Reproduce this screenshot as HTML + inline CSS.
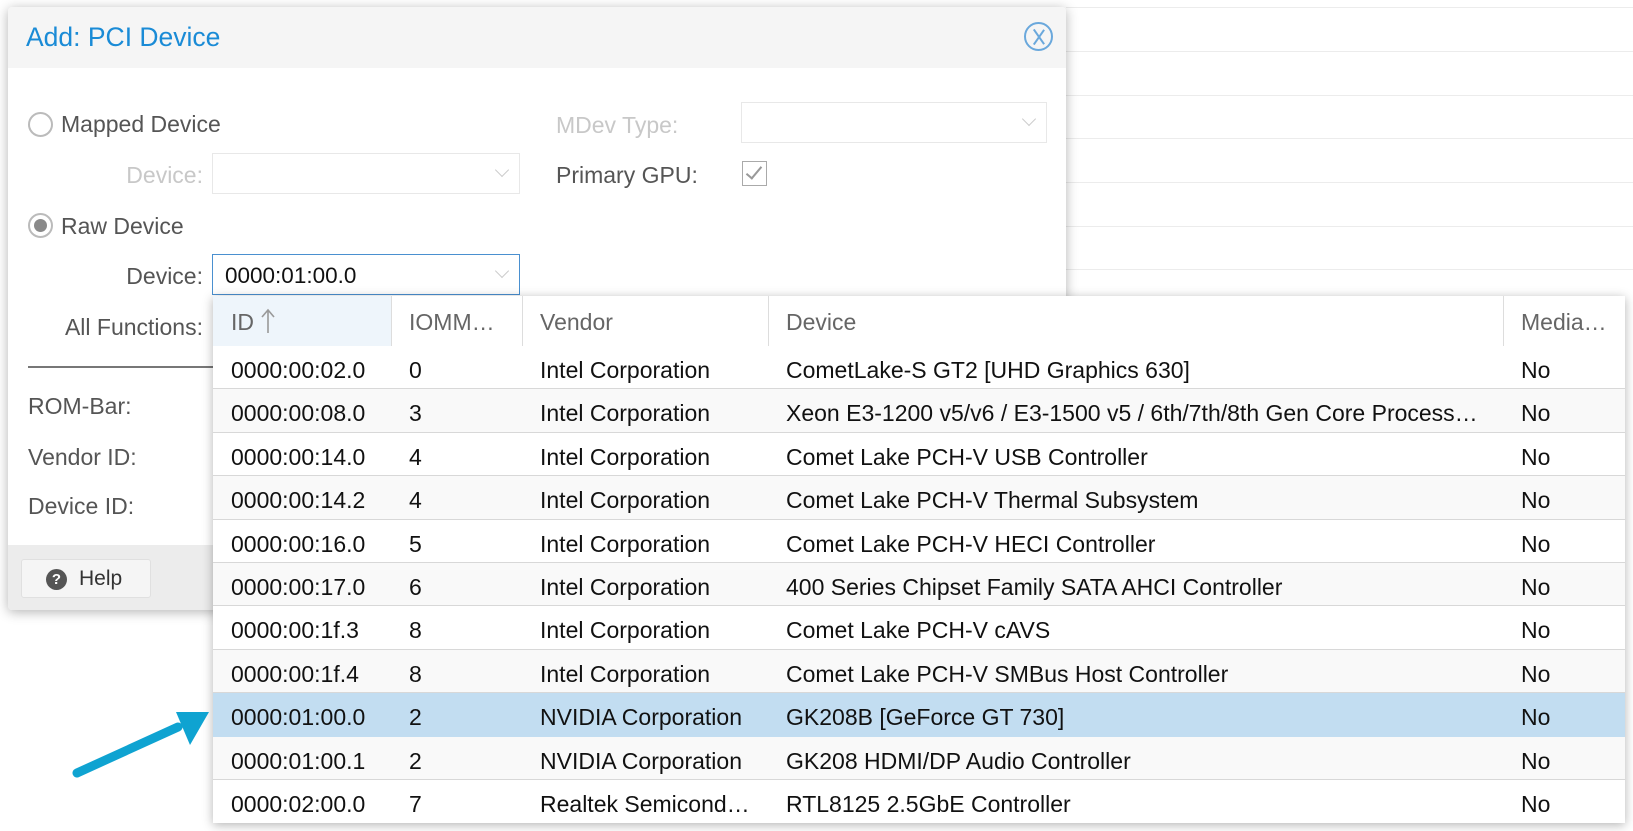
<!DOCTYPE html>
<html><head><meta charset="utf-8"><style>
*{box-sizing:border-box;margin:0;padding:0}
body{width:1633px;height:831px;overflow:hidden;background:#fff;font-family:"Liberation Sans",sans-serif;position:relative}
.bgl{position:absolute;left:1066px;right:0;height:1px;background:#ececec}
.dlg{position:absolute;left:8px;top:7px;width:1058px;height:603px;background:#fff;border-radius:4px;box-shadow:0 2px 12px rgba(0,0,0,.3);overflow:hidden}
.hd{height:61px;background:#f5f5f5;position:relative}
.hd .t{position:absolute;left:18px;top:15px;font-size:26.5px;color:#1a8bd6}
.x{position:absolute;left:1016px;top:15px;width:29px;height:29px;border:2px solid #6aa8dc;border-radius:50%}
.x:before,.x:after{content:"";position:absolute;left:12px;top:4px;width:1.5px;height:18px;background:#6aa8dc;transform:rotate(35deg)}
.x:after{transform:rotate(-35deg)}
.a{position:absolute;font-size:23px;color:#555;white-space:nowrap}
.dis{color:#c8c8c8}
.r{position:absolute;width:25px;height:25px;border:2px solid #bbb;border-radius:50%;background:#fff}
.r.on:after{content:"";position:absolute;left:4px;top:4px;width:13px;height:13px;border-radius:50%;background:#8a8a8a}
.cb{position:absolute;background:#fff;border:1px solid #e8e8e8}
.cb .v{position:absolute;right:12px;top:11px;width:10px;height:10px;border-right:1.5px solid #ccc;border-bottom:1.5px solid #ccc;transform:rotate(45deg)}
.ft{position:absolute;left:0;top:538px;width:100%;height:65px;background:#ececec}
.help{position:absolute;left:13px;top:14px;width:130px;height:39px;background:#f5f5f5;border:1px solid #e0e0e0;border-radius:3px;font-size:21px;color:#333}
.help i{position:absolute;left:24px;top:9px;width:21px;height:21px;border-radius:50%;background:#555;color:#fff;font-style:normal;font-weight:bold;font-size:15px;text-align:center;line-height:21px}
.help span{position:absolute;left:57px;top:7px}
.grid{position:absolute;left:213px;top:296px;width:1412px;height:527px;background:#fff;box-shadow:0 2px 10px rgba(0,0,0,.3);font-size:23px;color:#111}
.row{position:absolute;left:0;width:100%;height:43.4px;border-bottom:1px solid #d8d8d8}
.row span{position:absolute;top:11px;white-space:nowrap}
.h span{color:#666;top:13px}
</style></head><body>
<div class="bgl" style="top:7px"></div><div class="bgl" style="top:51px"></div><div class="bgl" style="top:95px"></div><div class="bgl" style="top:138px"></div><div class="bgl" style="top:182px"></div><div class="bgl" style="top:226px"></div><div class="bgl" style="top:269px"></div>
<div class="dlg">
<div class="hd"><div class="t">Add: PCI Device</div><div class="x"></div></div>
<div class="r" style="left:20px;top:105px"></div><div class="a" style="left:53px;top:104px">Mapped Device</div>
<div class="a dis" style="right:863px;top:155px">Device:</div>
<div class="cb" style="left:204px;top:146px;width:308px;height:41px"><div class="v"></div></div>
<div class="a dis" style="left:548px;top:105px">MDev Type:</div>
<div class="cb" style="left:733px;top:95px;width:306px;height:41px"><div class="v"></div></div>
<div class="a" style="left:548px;top:155px">Primary GPU:</div>
<div style="position:absolute;left:734px;top:154px;width:25px;height:25px;border:1.5px solid #aaa;background:#fff"><div style="position:absolute;left:7px;top:1px;width:8px;height:16px;border-right:2px solid #999;border-bottom:2px solid #999;transform:rotate(40deg)"></div></div>
<div class="r on" style="left:20px;top:206px"></div><div class="a" style="left:53px;top:206px">Raw Device</div>
<div class="a" style="right:863px;top:256px">Device:</div>
<div class="cb" style="left:204px;top:247px;width:308px;height:41px;border-color:#4a90d0"><span style="position:absolute;left:12px;top:8px;font-size:22.5px;color:#111">0000:01:00.0</span><div class="v"></div></div>
<div class="a" style="right:863px;top:307px">All Functions:</div>
<div style="position:absolute;left:20px;top:359px;width:190px;height:2px;background:#777"></div>
<div class="a" style="left:20px;top:386px">ROM-Bar:</div>
<div class="a" style="left:20px;top:437px">Vendor ID:</div>
<div class="a" style="left:20px;top:486px">Device ID:</div>
<div class="ft"><div class="help"><i>?</i><span>Help</span></div></div>
</div>
<div class="grid">
<div class="row h" style="top:0;height:50px;border-bottom:none">
<div style="position:absolute;left:0;top:0;width:178px;height:50px;background:#eef5fb"></div>
<span style="left:18px">ID</span><svg style="position:absolute;left:47px;top:12px" width="16" height="26"><path d="M8 25V2M2 9L8 2L14 9" stroke="#999" stroke-width="1.6" fill="none"/></svg>
<div style="position:absolute;left:178px;top:0;width:1px;height:50px;background:#ddd"></div><span style="left:196px">IOMM…</span>
<div style="position:absolute;left:309px;top:0;width:1px;height:50px;background:#ddd"></div><span style="left:327px">Vendor</span>
<div style="position:absolute;left:555px;top:0;width:1px;height:50px;background:#ddd"></div><span style="left:573px">Device</span>
<div style="position:absolute;left:1290px;top:0;width:1px;height:50px;background:#ddd"></div><span style="left:1308px">Media…</span>
</div>
<div class="row" style="top:50px"><span style="left:18px">0000:00:02.0</span><span style="left:196px">0</span><span style="left:327px">Intel Corporation</span><span style="left:573px">CometLake-S GT2 [UHD Graphics 630]</span><span style="left:1308px">No</span></div>
<div class="row" style="top:93.4px;background:#f9f9f9"><span style="left:18px">0000:00:08.0</span><span style="left:196px">3</span><span style="left:327px">Intel Corporation</span><span style="left:573px">Xeon E3-1200 v5/v6 / E3-1500 v5 / 6th/7th/8th Gen Core Process…</span><span style="left:1308px">No</span></div>
<div class="row" style="top:136.8px"><span style="left:18px">0000:00:14.0</span><span style="left:196px">4</span><span style="left:327px">Intel Corporation</span><span style="left:573px">Comet Lake PCH-V USB Controller</span><span style="left:1308px">No</span></div>
<div class="row" style="top:180.2px;background:#f9f9f9"><span style="left:18px">0000:00:14.2</span><span style="left:196px">4</span><span style="left:327px">Intel Corporation</span><span style="left:573px">Comet Lake PCH-V Thermal Subsystem</span><span style="left:1308px">No</span></div>
<div class="row" style="top:223.6px"><span style="left:18px">0000:00:16.0</span><span style="left:196px">5</span><span style="left:327px">Intel Corporation</span><span style="left:573px">Comet Lake PCH-V HECI Controller</span><span style="left:1308px">No</span></div>
<div class="row" style="top:267px;background:#f9f9f9"><span style="left:18px">0000:00:17.0</span><span style="left:196px">6</span><span style="left:327px">Intel Corporation</span><span style="left:573px">400 Series Chipset Family SATA AHCI Controller</span><span style="left:1308px">No</span></div>
<div class="row" style="top:310.4px"><span style="left:18px">0000:00:1f.3</span><span style="left:196px">8</span><span style="left:327px">Intel Corporation</span><span style="left:573px">Comet Lake PCH-V cAVS</span><span style="left:1308px">No</span></div>
<div class="row" style="top:353.8px;background:#f9f9f9"><span style="left:18px">0000:00:1f.4</span><span style="left:196px">8</span><span style="left:327px">Intel Corporation</span><span style="left:573px">Comet Lake PCH-V SMBus Host Controller</span><span style="left:1308px">No</span></div>
<div class="row" style="top:397.2px;background:#c2ddf1;border-bottom-color:#c2ddf1"><span style="left:18px">0000:01:00.0</span><span style="left:196px">2</span><span style="left:327px">NVIDIA Corporation</span><span style="left:573px">GK208B [GeForce GT 730]</span><span style="left:1308px">No</span></div>
<div class="row" style="top:440.6px;background:#f9f9f9"><span style="left:18px">0000:01:00.1</span><span style="left:196px">2</span><span style="left:327px">NVIDIA Corporation</span><span style="left:573px">GK208 HDMI/DP Audio Controller</span><span style="left:1308px">No</span></div>
<div class="row" style="top:484px;border-bottom:none"><span style="left:18px">0000:02:00.0</span><span style="left:196px">7</span><span style="left:327px">Realtek Semicond…</span><span style="left:573px">RTL8125 2.5GbE Controller</span><span style="left:1308px">No</span></div>
</div>
<svg style="position:absolute;left:0;top:0" width="1633" height="831"><line x1="77" y1="773" x2="178" y2="727" stroke="#0fa3d1" stroke-width="9" stroke-linecap="round"/><polygon points="209,712 176,712 190,745" fill="#0fa3d1"/></svg>
</body></html>
